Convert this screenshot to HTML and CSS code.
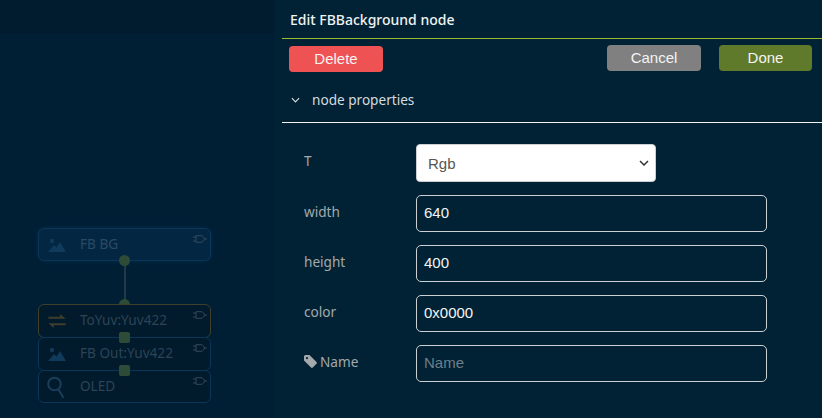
FILE: index.html
```html
<!DOCTYPE html>
<html lang="en">
<head>
  <meta charset="UTF-8">
  <meta name="viewport" content="width=device-width, initial-scale=1.0">
  <title>Edit FBBackground node</title>
  <link rel="stylesheet" href="styles.css">
</head>
<body>
  <div class="canvas">
    <div class="canvas-top"></div>

    <div class="node node-selected node-bg">
      <svg class="node-icon" viewBox="0 0 18 14"><circle class="pic" cx="4" cy="3" r="2.2"/><path class="pic" d="M0 14 L6 7 L8.5 9.5 L12 4 L18 14 Z"/></svg>
      <span class="node-label">FB BG</span>
      <svg class="gate" viewBox="0 0 14 8"><path d="M0 2H3M0 6H3M3 .7H8C10 .7 11 2.5 11.5 4C11 5.5 10 7.3 8 7.3H3ZM11.5 4H14"/></svg>
    </div>
    <div class="port port-round port-out-bg"></div>
    <div class="edge"></div>
    <div class="port port-round port-in-yuv"></div>

    <div class="node node-convert node-yuv">
      <svg class="node-icon" viewBox="0 0 16 13"><path class="swap" d="M0 2.5H11V0L16 4.5H0ZM16 10.5H5V13L0 8.5H16Z"/></svg>
      <span class="node-label">ToYuv:Yuv422</span>
      <svg class="gate" viewBox="0 0 14 8"><path d="M0 2H3M0 6H3M3 .7H8C10 .7 11 2.5 11.5 4C11 5.5 10 7.3 8 7.3H3ZM11.5 4H14"/></svg>
    </div>
    <div class="node node-out">
      <svg class="node-icon" viewBox="0 0 18 14"><circle class="pic" cx="4" cy="3" r="2.2"/><path class="pic" d="M0 14 L6 7 L8.5 9.5 L12 4 L18 14 Z"/></svg>
      <span class="node-label">FB Out:Yuv422</span>
      <svg class="gate" viewBox="0 0 14 8"><path d="M0 2H3M0 6H3M3 .7H8C10 .7 11 2.5 11.5 4C11 5.5 10 7.3 8 7.3H3ZM11.5 4H14"/></svg>
    </div>
    <div class="node node-oled">
      <svg class="node-icon node-icon-lens" viewBox="0 0 18 23"><circle cx="7.5" cy="7.5" r="6.3"/><path d="M11.5 13 L16.5 21.5"/></svg>
      <span class="node-label">OLED</span>
      <svg class="gate" viewBox="0 0 14 8"><path d="M0 2H3M0 6H3M3 .7H8C10 .7 11 2.5 11.5 4C11 5.5 10 7.3 8 7.3H3ZM11.5 4H14"/></svg>
    </div>
    <div class="port port-square port-a"></div>
    <div class="port port-square port-b"></div>
  </div>

  <div class="panel">
    <div class="panel-title">Edit FBBackground node</div>
    <div class="panel-actions">
      <button class="btn btn-delete">Delete</button>
      <div class="panel-actions-right">
        <button class="btn btn-cancel">Cancel</button>
        <button class="btn btn-done">Done</button>
      </div>
    </div>
    <div class="section-head">
      <svg class="chevron" viewBox="0 0 10 6"><path d="M1 1 L5 5 L9 1"/></svg>
      <span>node properties</span>
    </div>
    <div class="form">
      <div class="form-row">
        <label class="label-select">T</label>
        <div class="select">
          <span>Rgb</span>
          <svg class="select-arrow" viewBox="0 0 10 6"><path d="M1 1 L5 5 L9 1"/></svg>
        </div>
      </div>
      <div class="form-row">
        <label>width</label>
        <input type="text" value="640">
      </div>
      <div class="form-row">
        <label>height</label>
        <input type="text" value="400">
      </div>
      <div class="form-row">
        <label>color</label>
        <input type="text" value="0x0000">
      </div>
      <div class="form-row">
        <label><svg class="tag" viewBox="0 0 13 13"><path d="M0 1.5Q0 0 1.5 0H5.5L12.5 7Q13.3 7.9 12.5 8.8L8.8 12.5Q7.9 13.3 7 12.5L0 5.5ZM3 2A1.1 1.1 0 1 0 3 4.2A1.1 1.1 0 1 0 3 2Z" fill-rule="evenodd"/></svg>Name</label>
        <input type="text" placeholder="Name">
      </div>
    </div>
  </div>
</body>
</html>
```

FILE: styles.css
```css
* {
  box-sizing: border-box;
}

body {
  display: flex;
  width: 822px;
  height: 418px;
  margin: 0;
  overflow: hidden;
  font-family: "Noto Sans", sans-serif;
  background-color: #012234;
}

.canvas {
  position: relative;
  width: 275px;
  height: 418px;
  background-color: #001f35;
}

.canvas-top {
  height: 35px;
  background-color: #001c2e;
  border-bottom: 1px solid #012338;
}

.node {
  position: absolute;
  left: 38px;
  width: 173px;
  height: 34px;
  border: 1px solid #0a3659;
  border-radius: 6px;
  background-color: #011a2c;
}

.node-bg {
  top: 228px;
  height: 33px;
  background-color: #032743;
  border-color: #0b3657;
  box-shadow: 0 0 4px #032c4e;
}

.node-yuv {
  top: 304px;
  height: 34px;
  border-color: #3f3f2c;
}

.node-out {
  top: 337px;
}

.node-oled {
  top: 370px;
  height: 33px;
}

.node-icon {
  position: absolute;
  left: 9px;
  top: 9px;
  width: 18px;
  height: 14px;
}

.pic {
  fill: #0f3a5c;
}

.swap {
  fill: #3f3f2c;
}

.node-icon-lens {
  top: 5px;
  left: 8px;
  width: 18px;
  height: 24px;
  fill: none;
  stroke: #1a3e5a;
  stroke-width: 2;
}

.node-label {
  position: absolute;
  left: 41px;
  top: 5px;
  font-size: 13.6px;
  line-height: 19px;
  color: #2c4456;
  white-space: nowrap;
}

.node-bg .node-label {
  color: #2a4a63;
}

.gate {
  position: absolute;
  right: 3px;
  top: 6px;
  width: 14px;
  height: 8px;
  fill: none;
  stroke: #34495a;
  stroke-width: 1;
}

.edge {
  position: absolute;
  left: 124px;
  top: 261px;
  width: 2px;
  height: 44px;
  background-color: #223a47;
}

.port {
  position: absolute;
  background-color: #2d4b36;
}

.port-round {
  width: 11px;
  height: 11px;
  border-radius: 50%;
}

.port-out-bg {
  left: 119px;
  top: 255px;
  z-index: 1;
}

.port-in-yuv {
  left: 119px;
  top: 299px;
}

.port-square {
  width: 11px;
  height: 11px;
  border-radius: 2px;
  z-index: 1;
}

.port-a {
  left: 119px;
  top: 332px;
}

.port-b {
  left: 119px;
  top: 365px;
}

.panel {
  flex: 1;
  padding: 1px 0 0 7px;
  background-color: #012234;
}

.panel-title {
  height: 38px;
  padding: 9px 0 0 8px;
  border-bottom: 1px solid #9dbb2f;
  font-size: 14px;
  font-weight: 500;
  line-height: 19px;
  color: #f0f3f5;
}

.panel-actions {
  display: flex;
  justify-content: space-between;
  padding: 6px 10px 0 7px;
  height: 40px;
}

.panel-actions-right {
  display: flex;
  gap: 18px;
}

.btn {
  width: 94px;
  height: 26px;
  padding: 0 0 2px;
  border: none;
  border-radius: 4px;
  font-family: "Liberation Sans", sans-serif;
  font-size: 15px;
  color: #f4f4f4;
}

.btn-delete {
  margin-top: 1px;
  background-color: #ee5253;
}

.btn-cancel {
  background-color: #808080;
}

.btn-done {
  width: 93px;
  background-color: #607a2c;
}

.section-head {
  display: flex;
  align-items: center;
  height: 44px;
  padding: 0 0 2px 9px;
  border-bottom: 1px solid #f2f4f5;
  font-size: 13.6px;
  color: #d5dbdf;
}

.chevron {
  width: 9px;
  height: 6px;
  margin-right: 12px;
  fill: none;
  stroke: #d5dbdf;
  stroke-width: 1.3;
}

.form {
  display: flex;
  flex-direction: column;
  gap: 13px;
  padding: 21px 0 0 22px;
}

.form-row {
  display: flex;
  align-items: center;
  width: 463px;
}

.form-row label {
  display: flex;
  align-items: center;
  width: 112px;
  margin-top: -4px;
  font-size: 13.6px;
  color: #a3a9ad;
}

.form-row .label-select {
  margin-top: -6px;
}

.form-row input {
  width: 351px;
  height: 37px;
  padding: 0 7px 2px;
  border: 1px solid #ccd0d2;
  border-radius: 5px;
  background: transparent;
  outline: none;
  font-family: "Liberation Sans", sans-serif;
  font-size: 15px;
  color: #f2f4f5;
}

.form-row input::placeholder {
  color: #6c7f8b;
  opacity: 1;
}

.select {
  display: flex;
  align-items: center;
  justify-content: space-between;
  width: 240px;
  height: 38px;
  padding: 0 6px 0 11px;
  border: 1px solid #ccd0d2;
  border-radius: 4px;
  background-color: #ffffff;
  font-family: "Liberation Sans", sans-serif;
  font-size: 15px;
  color: #555555;
}

.select-arrow {
  width: 10px;
  height: 6px;
  fill: none;
  stroke: #333333;
  stroke-width: 1.5;
}

.tag {
  width: 13px;
  height: 13px;
  margin-right: 3px;
  fill: #a3a9ad;
}
```
